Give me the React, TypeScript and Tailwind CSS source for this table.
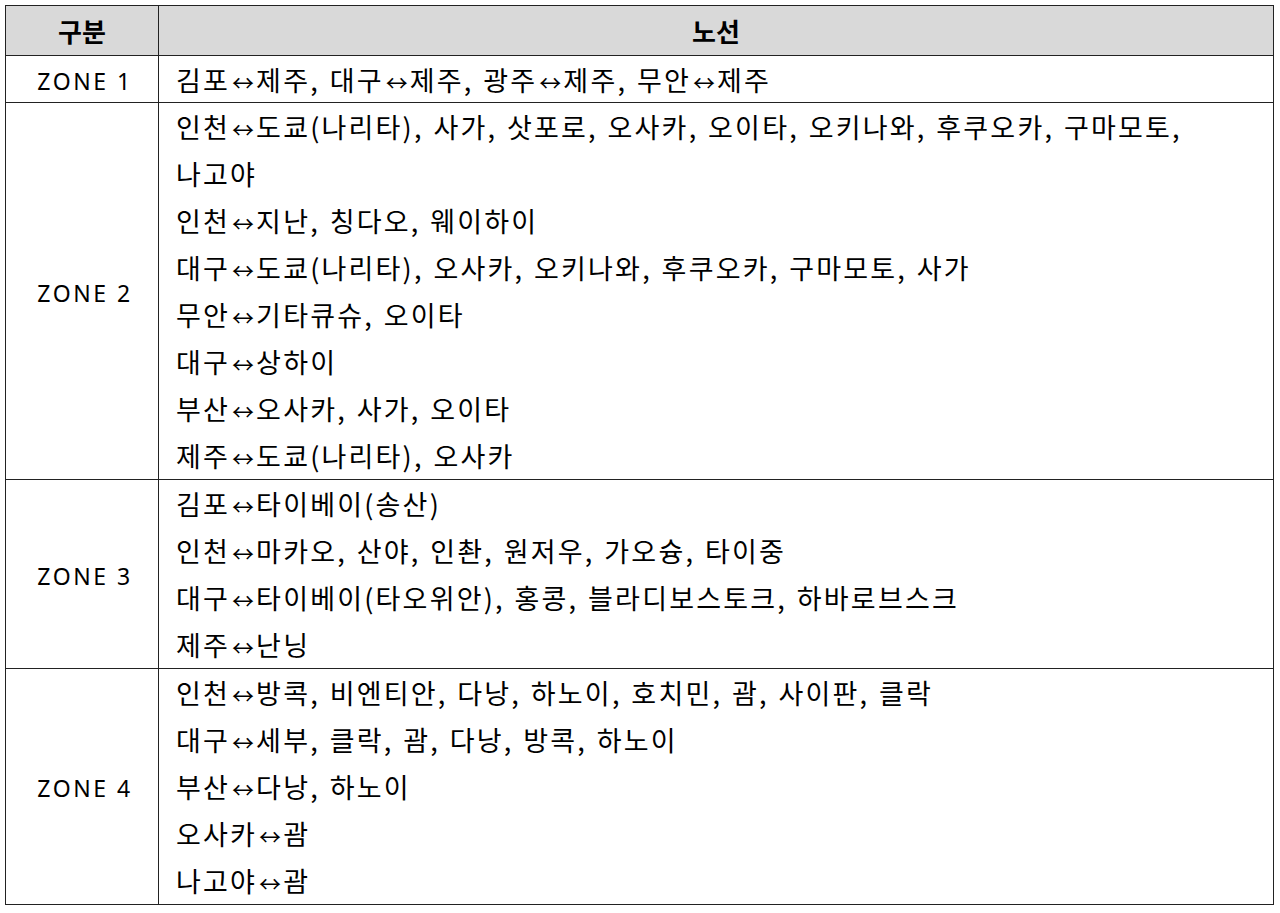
import React from "react";

const rows: { zone: string; lines: string[] }[] = [
  { zone: "ZONE 1", lines: ["김포↔제주, 대구↔제주, 광주↔제주, 무안↔제주"] },
  {
    zone: "ZONE 2",
    lines: [
      "인천↔도쿄(나리타), 사가, 삿포로, 오사카, 오이타, 오키나와, 후쿠오카, 구마모토,",
      "나고야",
      "인천↔지난, 칭다오, 웨이하이",
      "대구↔도쿄(나리타), 오사카, 오키나와, 후쿠오카, 구마모토, 사가",
      "무안↔기타큐슈, 오이타",
      "대구↔상하이",
      "부산↔오사카, 사가, 오이타",
      "제주↔도쿄(나리타), 오사카",
    ],
  },
  {
    zone: "ZONE 3",
    lines: [
      "김포↔타이베이(송산)",
      "인천↔마카오, 산야, 인촨, 원저우, 가오슝, 타이중",
      "대구↔타이베이(타오위안), 홍콩, 블라디보스토크, 하바로브스크",
      "제주↔난닝",
    ],
  },
  {
    zone: "ZONE 4",
    lines: [
      "인천↔방콕, 비엔티안, 다낭, 하노이, 호치민, 괌, 사이판, 클락",
      "대구↔세부, 클락, 괌, 다낭, 방콕, 하노이",
      "부산↔다낭, 하노이",
      "오사카↔괌",
      "나고야↔괌",
    ],
  },
];

function Line({ text }: { text: string }) {
  const parts = text.split("↔");
  return (
    <div className="h-[47px] leading-[47px] whitespace-pre tracking-[2.2px] [word-spacing:1.5px]">
      {parts.map((p, i) => (
        <React.Fragment key={i}>
          {i > 0 && (
            <span className="inline-block w-[26px] text-center tracking-normal text-[22px]">↔</span>
          )}
          {p}
        </React.Fragment>
      ))}
    </div>
  );
}

export default function App() {
  return (
    <div
      className="w-[1280px] h-[913px] bg-white pt-[5px] pl-[5px] text-black"
      style={{ fontFamily: '"Noto Sans CJK KR", "Noto Sans", sans-serif' }}
    >
      <div className="w-[1269px] border border-[#222] flex flex-col">
        <div className="flex h-[50px] bg-[#d9d9d9] border-b border-[#222]">
          <div className="w-[153px] border-r border-[#222] flex items-center justify-center text-[26px] font-bold">
            구분
          </div>
          <div className="flex-1 flex items-center justify-center text-[26px] font-bold">노선</div>
        </div>
        {rows.map((r, i) => (
          <div
            key={r.zone}
            className={`flex ${i < rows.length - 1 ? "border-b border-[#222]" : ""}`}
          >
            <div
              className="w-[153px] shrink-0 border-r border-[#222] flex items-center justify-center text-[23px] tracking-[2.5px] pt-[4px] pl-[6px]"
              style={{ fontFamily: '"Noto Sans", sans-serif' }}
            >
              {r.zone}
            </div>
            <div
              className={`flex-1 pl-[17px] flex flex-col text-[27px] ${i === 0 ? "h-[46px] overflow-hidden" : ""}`}
            >
              {r.lines.map((l, j) => (
                <Line key={j} text={l} />
              ))}
            </div>
          </div>
        ))}
      </div>
    </div>
  );
}
